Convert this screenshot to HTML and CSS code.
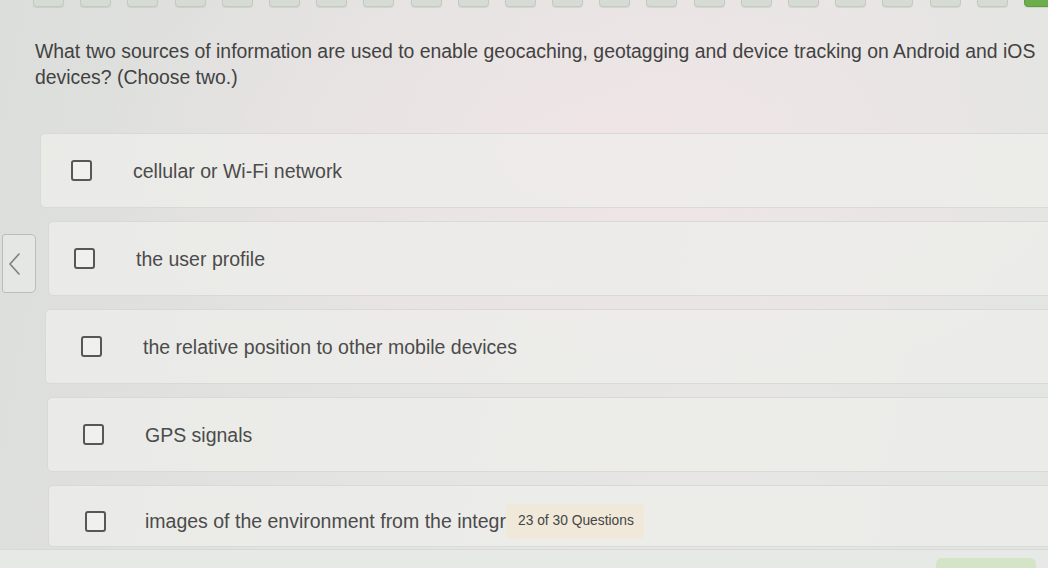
FILE: index.html
```html
<!DOCTYPE html>
<html lang="en">
<head>
<meta charset="utf-8">
<title>Question 23</title>
<link rel="stylesheet" href="styles.css">
</head>
<body>
<div class="page">
  <div class="nav-strip">
    <span class="nav-box"></span><span class="nav-box"></span><span class="nav-box"></span><span class="nav-box"></span><span class="nav-box"></span><span class="nav-box"></span><span class="nav-box"></span><span class="nav-box"></span><span class="nav-box"></span><span class="nav-box"></span><span class="nav-box"></span><span class="nav-box"></span><span class="nav-box"></span><span class="nav-box"></span><span class="nav-box"></span><span class="nav-box"></span><span class="nav-box"></span><span class="nav-box"></span><span class="nav-box"></span><span class="nav-box"></span><span class="nav-box"></span><span class="nav-box nav-box--current"></span>
  </div>

  <p class="question">What two sources of information are used to enable geocaching, geotagging and device tracking on Android and iOS devices? (Choose two.)</p>

  <button class="back-btn" aria-label="Previous">
    <svg width="14" height="24" viewBox="0 0 14 24"><path d="M11 2 L2 12 L11 22" fill="none" stroke="#7d807d" stroke-width="1.6" stroke-linecap="round" stroke-linejoin="round"/></svg>
  </button>

  <div class="options">
    <label class="option opt-1"><span class="checkbox"></span><span class="option-text">cellular or Wi-Fi network</span></label>
    <label class="option opt-2"><span class="checkbox"></span><span class="option-text">the user profile</span></label>
    <label class="option opt-3"><span class="checkbox"></span><span class="option-text">the relative position to other mobile devices</span></label>
    <label class="option opt-4"><span class="checkbox"></span><span class="option-text">GPS signals</span></label>
    <label class="option opt-5"><span class="checkbox"></span><span class="option-text">images of the environment from the integrated camera</span>
      <span class="tooltip">23 of 30 Questions</span>
    </label>
  </div>

  <div class="footer">
    <span class="submit-btn"></span>
  </div>
</div>
</body>
</html>
```

FILE: styles.css
```css
* { box-sizing: border-box; }

html, body {
  margin: 0;
  padding: 0;
}

body {
  width: 1048px;
  height: 568px;
  overflow: hidden;
  font-family: "Liberation Sans", Arial, sans-serif;
  background:
    radial-gradient(ellipse 520px 260px at 620px 150px, rgba(240, 228, 230, 0.9), rgba(240, 228, 230, 0) 100%),
    linear-gradient(100deg, #dcdedb 0%, #e4e4e2 40%, #e7e6e4 70%, #e2e5e1 100%);
}

.page {
  position: relative;
  width: 1048px;
  height: 568px;
}

.nav-strip {
  display: flex;
  gap: 16.2px;
  padding-left: 33px;
  height: 8px;
  overflow: hidden;
}

.nav-box {
  flex: 0 0 31px;
  height: 22px;
  margin-top: -15px;
  border: 1px solid #c3cbc1;
  border-radius: 4px;
  background: #d6dcd4;
  box-shadow: 0 1px 1px rgba(0, 0, 0, 0.08);
}

.nav-box--current {
  background: #6cae4a;
  border-color: #5e9c40;
}

.question {
  margin: 30px 0 0 35px;
  width: 1012px;
  font-size: 19.4px;
  line-height: 26px;
  color: #424242;
}

.back-btn {
  position: absolute;
  left: 2px;
  top: 234px;
  width: 34px;
  height: 59px;
  padding: 0 8px 0 0;
  border: 1.5px solid #b6c0b5;
  border-radius: 3px 5px 5px 3px;
  background: #e4e7e3;
  display: flex;
  align-items: center;
  justify-content: center;
}

.options {
  display: flex;
  flex-direction: column;
  gap: 13px;
  margin-top: 43px;
}

.option {
  position: relative;
  display: flex;
  align-items: center;
  height: 75px;
  margin-right: -20px;
  border: 1px solid #d9dad7;
  border-radius: 5px;
  background: rgba(238, 237, 235, 0.75);
  font-size: 19.5px;
  color: #4b4b4b;
}

.opt-1 { margin-left: 40px; padding-left: 30px; }
.opt-2 { margin-left: 48px; padding-left: 25px; }
.opt-3 { margin-left: 45px; padding-left: 35px; }
.opt-4 { margin-left: 47px; padding-left: 35px; }
.opt-5 { margin-left: 48px; padding-left: 36px; height: 62px; align-items: flex-start; padding-top: 24px; }

.checkbox {
  flex: 0 0 21px;
  width: 21px;
  height: 21px;
  border: 2px solid #575757;
  border-radius: 3px;
  background: #f0f0ee;
  margin-right: 41px;
}

.opt-5 .checkbox { margin-top: 1px; margin-right: 39px; }

.option-text {
  white-space: nowrap;
  line-height: 22px;
}

.opt-5 .option-text {
  max-width: 364px;
  overflow: hidden;
}

.tooltip {
  position: absolute;
  left: 457px;
  top: 18px;
  width: 138px;
  height: 35px;
  padding: 9px 0 0 12px;
  border-radius: 4px;
  background: #f0e9da;
  font-size: 13.8px;
  color: #454545;
  white-space: nowrap;
}

.footer {
  position: absolute;
  left: 0;
  top: 549px;
  width: 1048px;
  height: 19px;
  border-top: 1px solid #d6d9d5;
  background: #e6e9e5;
}

.submit-btn {
  position: absolute;
  left: 936px;
  top: 8px;
  width: 100px;
  height: 30px;
  border-radius: 6px;
  background: #d3e4c7;
}
```
